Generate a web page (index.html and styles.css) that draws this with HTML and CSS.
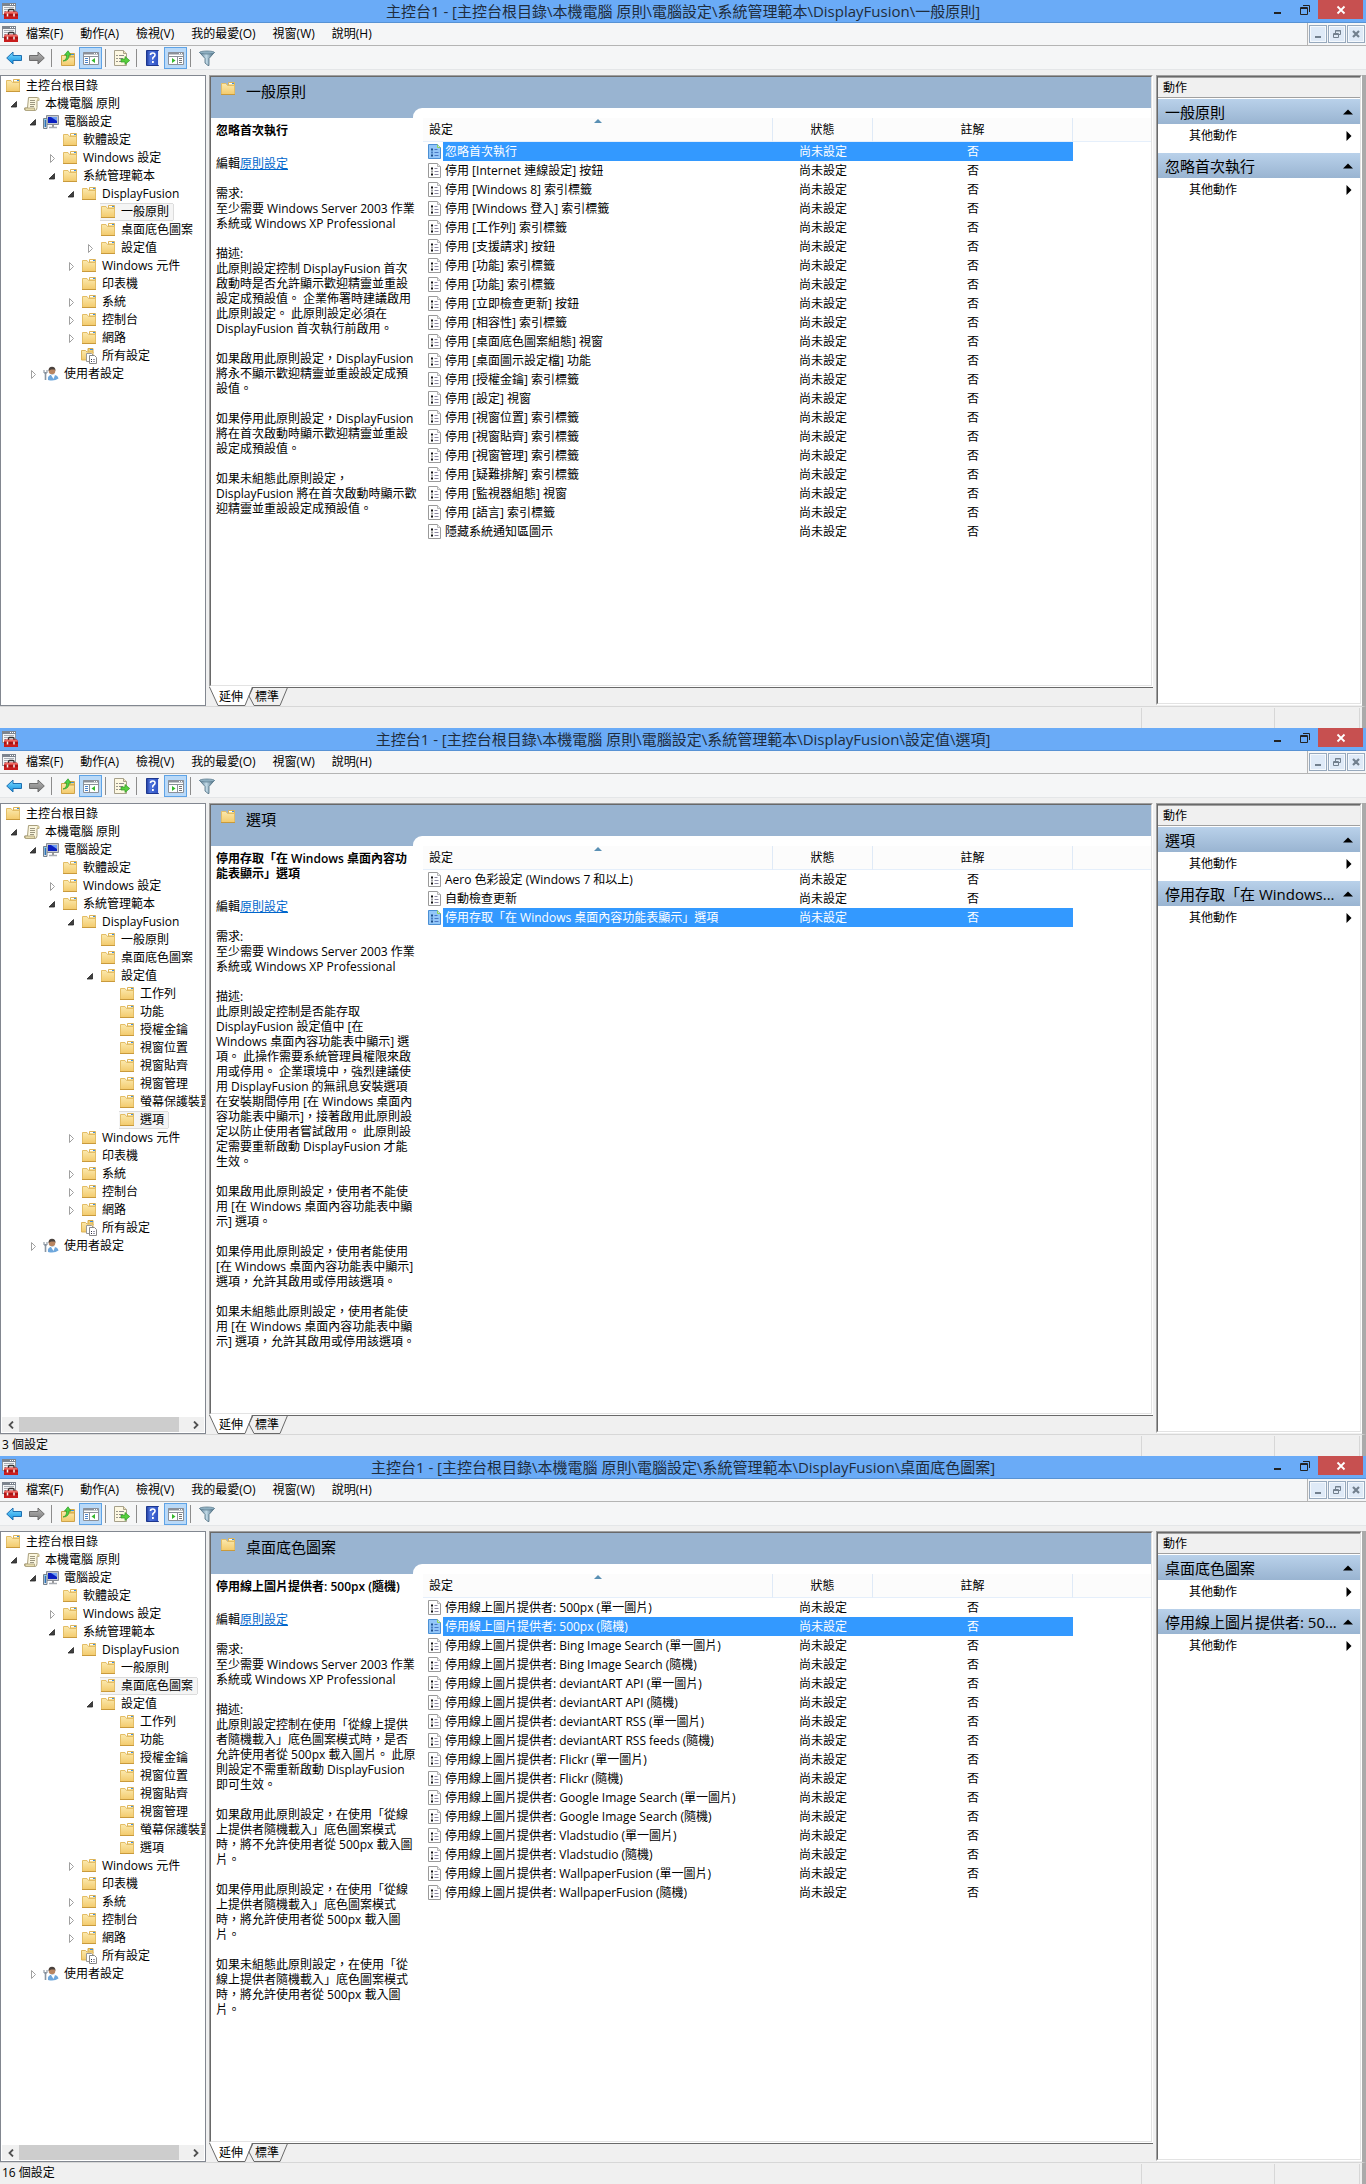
FILE: index.html
```html
<!DOCTYPE html>
<html lang="zh-Hant">
<head>
<meta charset="utf-8">
<title>主控台1</title>
<link rel="stylesheet" href="styles.css">
</head>
<body>
<svg class="sprite" aria-hidden="true">
  <defs>
    <linearGradient id="g-folder" x1="0" y1="0" x2="0" y2="1"><stop offset="0" stop-color="#fbe9ae"/><stop offset="1" stop-color="#f3ca6b"/></linearGradient>
    <linearGradient id="g-blue" x1="0" y1="0" x2="0" y2="1"><stop offset="0" stop-color="#7fdcff"/><stop offset="1" stop-color="#0f8fe0"/></linearGradient>
    <linearGradient id="g-gray" x1="0" y1="0" x2="0" y2="1"><stop offset="0" stop-color="#b5b5b5"/><stop offset="1" stop-color="#7a7a7a"/></linearGradient>
    <linearGradient id="g-help" x1="0" y1="0" x2="1" y2="0"><stop offset="0" stop-color="#1f3c9c"/><stop offset=".3" stop-color="#4f74de"/><stop offset="1" stop-color="#2c4fc0"/></linearGradient>
    <linearGradient id="g-funnel" x1="0" y1="0" x2="1" y2="0"><stop offset="0" stop-color="#55788f"/><stop offset=".45" stop-color="#c3dbe8"/><stop offset="1" stop-color="#3f6178"/></linearGradient>
  </defs>
  <symbol id="mmc" viewBox="0 0 16 16">
    <rect x=".5" y=".5" width="13" height="11" fill="#f4f6f8" stroke="#8d939b"/>
    <path d="M0 1.5h14" stroke="#7d848e" stroke-width="3"/>
    <path d="M8 1.5h1M10 1.5h1M12 1.5h1" stroke="#fff"/>
    <path d="M2 4.500h10M2 6.500h4M2 8.500h2" stroke="#a8adb4"/>
    <path d="M6.500 9V7.500q0-1 1-1h3.500q1 0 1 1V9" fill="none" stroke="#333" stroke-width="1.400"/>
    <path d="M3 8.500h12l1 2V16H2v-5.500z" fill="#c81d1d"/>
    <path d="M3 9h12l.7 1.500H2.400z" fill="#ee6a62"/>
    <path d="M2 12h14" stroke="#8e0d0d"/>
    <path d="M5.500 10.500v3M12 10.500v3" stroke="#f3f3f3" stroke-width="1.500"/>
  </symbol>
  <symbol id="folder" viewBox="0 0 16 16">
    <path d="M8.500 1.500h6V6h-6z" fill="#f6dc92" stroke="#dcb45a"/>
    <path d="M9 2.500h5" stroke="#fff"/><path d="M12 2.500h2" stroke="#3f8fe0"/>
    <path d="M1.500 2.500h4.500L7.500 4.500h7v9h-13z" fill="url(#g-folder)" stroke="#e3bd66"/>
    <path d="M1 13.500h14" stroke="#c99a3c"/>
  </symbol>
  <symbol id="scroll" viewBox="0 0 16 16">
    <path d="M4.500 1.500h9q2 0 1.500 3h-2v7q0 3-2 3h-9q-2 0-1.500-2.500h3z" fill="#fbf6df" stroke="#a99f7c"/>
    <path d="M3.500 12h7v2.500h-8q-1.500 0-1.500-2.500z" fill="#e6dcae" stroke="#a99f7c" stroke-width=".8"/>
    <path d="M6 4.500h5M6 6.500h5M6 8.500h5M6 10.500h4" stroke="#9b9680"/>
    <path d="M13 4.500V3q0-1 1-1t1 2.500z" fill="#d8cc98"/>
  </symbol>
  <symbol id="computer" viewBox="0 0 16 16">
    <path d="M3.500 1.500h12v9h-12z" fill="#c4c8ce" stroke="#888d95"/>
    <path d="M5 3h9v6H5z" fill="#0a1fc0"/><path d="M8 3h6v4z" fill="#6c9cf4"/>
    <path d="M9 11h2v2H9z" fill="#999"/><path d="M6 13.500h8" stroke="#a7abb2" stroke-width="1.500"/>
    <path d="M.5 4.500h3.500v10H.5z" fill="#dce3ea" stroke="#74808c"/>
    <path d="M2.300 6v7" stroke="#2b74b8" stroke-width="1.500"/><path d="M1 5.500h2.500" stroke="#8bd0ee"/>
  </symbol>
  <symbol id="user" viewBox="0 0 16 16">
    <path d="M5 14q-1-5 4.500-5.500Q15 9 15.500 12.500q-4 3-10.500 1.500z" fill="#6ea7dc"/>
    <path d="M8 9l2.500 4L12 9z" fill="#fff"/>
    <circle cx="9" cy="5" r="3.300" fill="#b98560"/><path d="M5.500 5Q5.500.8 9 .8T12.500 5L11.500 3.500H8z" fill="#4a423d"/>
    <path d="M2.500 6v8" stroke="#8995a1" stroke-width="1.600"/><path d="M1 4v3h3V4" fill="none" stroke="#7d8894"/>
  </symbol>
  <symbol id="allset" viewBox="0 0 16 16">
    <path d="M7 .5h5V5H7z" fill="#f2d27c" stroke="#d4a846"/><path d="M9 1.500h3" stroke="#3f8fe0"/>
    <path d="M.5 2.500h4L6 4h6v8H.5z" fill="url(#g-folder)" stroke="#dcb45a"/>
    <path d="M5.500 5.500h5l2 2v6h-7z" fill="#fff" stroke="#999"/>
    <path d="M8.500 7.500h5l2 2v6h-7z" fill="#fff" stroke="#888"/>
    <path d="M10 11.500h1M10 13.500h1" stroke="#334"/><path d="M12 11.500h2M12 13.500h2" stroke="#99a"/>
  </symbol>
  <symbol id="doc" viewBox="0 0 14 16">
    <path d="M.5.5h9l3 3v11H.5z" fill="#fff" stroke="#9a9a9a"/><path d="M9.500.5v3h3" fill="#eee" stroke="#b5b5b5"/>
    <path d="M3 5.500h2M3 11.500h2" stroke="#111" stroke-width="2"/><path d="M3 8.500h2" stroke="#999" stroke-width="2"/>
    <path d="M6.500 5.500h3M6.500 8.500h4M6.500 11.500h4" stroke="#8a86a0"/>
  </symbol>
  <symbol id="docsel" viewBox="0 0 14 16">
    <path d="M.5.5h9l3 3v11H.5z" fill="#93c6f8" stroke="#4a8fd4"/><path d="M9.500.5v3h3" fill="#cdeed0" stroke="#8dd35c"/>
    <path d="M3 5.500h2M3 11.500h2" stroke="#1c4e8a" stroke-width="2"/><path d="M3 8.500h2" stroke="#4a80c0" stroke-width="2"/>
    <path d="M6.500 5.500h3M6.500 8.500h4M6.500 11.500h4" stroke="#4978c4"/>
  </symbol>
  <symbol id="back" viewBox="0 0 16 16"><path d="M.7 8 7 2v3.500h8.500v5H7V14z" fill="url(#g-blue)" stroke="#1d6eb0" stroke-linejoin="round"/></symbol>
  <symbol id="forward" viewBox="0 0 16 16"><path d="M15.300 8 9 2v3.500H.5v5H9V14z" fill="url(#g-gray)" stroke="#6d6d6d" stroke-linejoin="round"/></symbol>
  <symbol id="up" viewBox="0 0 16 16">
    <path d="M9 3.500h5.500V7H9z" fill="#f2d27c" stroke="#d4a846"/><path d="M11 4.500h3" stroke="#3f8fe0"/>
    <path d="M1.500 5.500h5L8 7h6.500v8.500h-13z" fill="url(#g-folder)" stroke="#cfa349"/>
    <path d="M3 11q4-1 3.500-6H4.500L8 .8 11 5H9q0 6-6 6z" fill="#4fd044" stroke="#2d9a24" stroke-width=".7"/>
  </symbol>
  <symbol id="pane-left" viewBox="0 0 16 16">
    <path d="M.5 2.500h15v12H.5z" fill="#fff" stroke="#8b9099"/><path d="M0 3.500h16" stroke="#8b9099" stroke-width="2"/><path d="M11 3.500h1M13 3.500h1" stroke="#fff"/>
    <path d="M1 6.500h14M6.500 7v8" stroke="#8b9099"/><path d="M2 8.500h3M2 10.500h3M2 12.500h3" stroke="#4a82c8"/>
    <path d="M12 8v5l-3.500-2.500z" fill="#35b82c"/>
  </symbol>
  <symbol id="pane-right" viewBox="0 0 16 16">
    <path d="M.5 2.500h15v12H.5z" fill="#fff" stroke="#8b9099"/><path d="M0 3.500h16" stroke="#8b9099" stroke-width="2"/><path d="M11 3.500h1M13 3.500h1" stroke="#fff"/>
    <path d="M1 6.500h14M9.500 7v8" stroke="#8b9099"/><path d="M11 8.500h3M11 10.500h3M11 12.500h3" stroke="#777"/>
    <path d="M4 8v5l3.500-2.500z" fill="#35b82c"/>
  </symbol>
  <symbol id="export" viewBox="0 0 16 16">
    <path d="M.5.5h9l3 3v12H.5z" fill="#fdf8e2" stroke="#a6a08a"/><path d="M9.500.5v3h3" fill="#eee3b8" stroke="#a6a08a"/>
    <path d="M2.500 5.500h1M2.500 8.500h1M2.500 11.500h1" stroke="#333"/><path d="M5 5.500h5M5 8.500h4M5 11.500h4" stroke="#8a8a8a"/>
    <path d="M7 9h4V6.500l4.700 4L11 14.500V12H7z" fill="#57cf3e" stroke="#2f9a22" stroke-width=".7"/>
  </symbol>
  <symbol id="help" viewBox="0 0 14 16">
    <path d="M.5.5h12v15H.5z" fill="url(#g-help)" stroke="#1c368e"/><path d="M12.500 1v14" stroke="#e8ecf8"/>
    <path d="M4.500 5q0-2 2.300-2T9 5q0 1.300-1.300 2T6.800 9.500" fill="none" stroke="#fff" stroke-width="1.600"/><path d="M6 11h1.800v2H6z" fill="#fff"/>
  </symbol>
  <symbol id="filter" viewBox="0 0 16 16">
    <path d="M.7 2.500 6 8.500v4.500l3 2.500h1V8.500l5.300-6z" fill="url(#g-funnel)" stroke="#4d6d80" stroke-width=".8"/>
    <ellipse cx="8" cy="2.500" rx="7.500" ry="1.500" fill="#8fb0c2" stroke="#5c7c8f" stroke-width=".8"/>
  </symbol>
  <symbol id="open" viewBox="0 0 8 10"><path d="M6.500 2.500v5.500H1z" fill="#404040" stroke="#262626" stroke-width=".8"/></symbol>
  <symbol id="closed" viewBox="0 0 8 10"><path d="M2.500 1.500v8L6.500 5.500z" fill="#fff" stroke="#a0a0a0"/></symbol>
  <symbol id="win-min" viewBox="0 0 12 12"><path d="M2 9h7" stroke="#222" stroke-width="2"/></symbol>
  <symbol id="win-restore" viewBox="0 0 12 12"><path d="M1.500 3.500h7v7h-7zM1 4.500h8M4 1.500h6.500V8" fill="none" stroke="#222"/></symbol>
  <symbol id="win-close" viewBox="0 0 12 12"><path d="m2.500 2.500 7 7m0-7-7 7" stroke="#fff" stroke-width="1.800"/></symbol>
  <symbol id="mdi-min" viewBox="0 0 12 12"><path d="M3 9h6" stroke="#72808e" stroke-width="2"/></symbol>
  <symbol id="mdi-restore" viewBox="0 0 12 12"><path d="M2.500 5.500h5v4h-5zM2 6.500h6M4.500 5V2.500h5v4H8M4 3h6" fill="none" stroke="#72808e"/></symbol>
  <symbol id="mdi-close" viewBox="0 0 12 12"><path d="m3 3 6 6m0-6-6 6" stroke="#72808e" stroke-width="2.200"/></symbol>
  <symbol id="collapse" viewBox="0 0 10 6"><path d="M0 5.500 5 .5l5 5z" fill="#000"/></symbol>
  <symbol id="submenu" viewBox="0 0 6 10"><path d="M.5 0v10l5-5z" fill="#000"/></symbol>
  <symbol id="sort" viewBox="0 0 8 4"><path d="M0 4 4 0l4 4z" fill="#5a90b4"/></symbol>
  <symbol id="arrow-l" viewBox="0 0 8 8"><path d="M6 .5 2.500 4 6 7.500" fill="none" stroke="#505050" stroke-width="1.800"/></symbol>
  <symbol id="arrow-r" viewBox="0 0 8 8"><path d="M2 .5 5.500 4 2 7.500" fill="none" stroke="#505050" stroke-width="1.800"/></symbol>
  <symbol id="tabs" viewBox="0 0 84 19">
    <path d="M0 0h43l-7 18.500H9z" fill="#fff"/>
    <path d="M44 .5 40 9l5 9.500h26L78.500.5z" fill="#f0f0f0" stroke="#696969"/>
    <path d="M.5 0 9 18.500h27L43.500 0" fill="none" stroke="#696969"/>
    <path d="M43 .5h41" stroke="#696969"/>
  </symbol>
</svg>

<section class="window">
  <header class="titlebar">
    <svg class="i16"><use href="#mmc"/></svg>
    <h1>主控台1 - [主控台根目錄\本機電腦 原則\電腦設定\系統管理範本\DisplayFusion\一般原則]</h1>
    <div class="winbtns"><button aria-label="最小化"><svg><use href="#win-min"/></svg></button><button aria-label="還原"><svg><use href="#win-restore"/></svg></button><button class="close" aria-label="關閉"><svg><use href="#win-close"/></svg></button></div>
  </header>
  <nav class="menubar">
    <svg class="i16"><use href="#mmc"/></svg>
    <button>檔案(F)</button><button>動作(A)</button><button>檢視(V)</button><button>我的最愛(O)</button><button>視窗(W)</button><button>說明(H)</button>
    <div class="mdi"><button aria-label="最小化"><svg><use href="#mdi-min"/></svg></button><button aria-label="還原"><svg><use href="#mdi-restore"/></svg></button><button aria-label="關閉"><svg><use href="#mdi-close"/></svg></button></div>
  </nav>
  <div class="toolbar">
    <button aria-label="上一頁"><svg><use href="#back"/></svg></button><button aria-label="下一頁"><svg><use href="#forward"/></svg></button><i></i>
    <button aria-label="上移一層"><svg><use href="#up"/></svg></button><button class="on" aria-label="顯示樹狀目錄"><svg><use href="#pane-left"/></svg></button><i></i>
    <button aria-label="匯出清單"><svg><use href="#export"/></svg></button><i></i>
    <button aria-label="說明"><svg><use href="#help"/></svg></button><button class="on" aria-label="顯示動作窗格"><svg><use href="#pane-right"/></svg></button><i></i>
    <button aria-label="篩選器"><svg><use href="#filter"/></svg></button>
  </div>
  <div class="work">
    <aside class="treepane">
      <ul class="tree">
        <li><svg><use href="#folder"/></svg><span>主控台根目錄</span></li>
        <li class="l1"><b><svg><use href="#open"/></svg></b><svg><use href="#scroll"/></svg><span>本機電腦 原則</span></li>
        <li class="l2"><b><svg><use href="#open"/></svg></b><svg><use href="#computer"/></svg><span>電腦設定</span></li>
        <li class="l3"><b></b><svg><use href="#folder"/></svg><span>軟體設定</span></li>
        <li class="l3"><b><svg><use href="#closed"/></svg></b><svg><use href="#folder"/></svg><span>Windows 設定</span></li>
        <li class="l3"><b><svg><use href="#open"/></svg></b><svg><use href="#folder"/></svg><span>系統管理範本</span></li>
        <li class="l4"><b><svg><use href="#open"/></svg></b><svg><use href="#folder"/></svg><span>DisplayFusion</span></li>
        <li class="l5 sel"><b></b><svg><use href="#folder"/></svg><span>一般原則</span></li>
        <li class="l5"><b></b><svg><use href="#folder"/></svg><span>桌面底色圖案</span></li>
        <li class="l5"><b><svg><use href="#closed"/></svg></b><svg><use href="#folder"/></svg><span>設定值</span></li>
        <li class="l4"><b><svg><use href="#closed"/></svg></b><svg><use href="#folder"/></svg><span>Windows 元件</span></li>
        <li class="l4"><b></b><svg><use href="#folder"/></svg><span>印表機</span></li>
        <li class="l4"><b><svg><use href="#closed"/></svg></b><svg><use href="#folder"/></svg><span>系統</span></li>
        <li class="l4"><b><svg><use href="#closed"/></svg></b><svg><use href="#folder"/></svg><span>控制台</span></li>
        <li class="l4"><b><svg><use href="#closed"/></svg></b><svg><use href="#folder"/></svg><span>網路</span></li>
        <li class="l4"><b></b><svg><use href="#allset"/></svg><span>所有設定</span></li>
        <li class="l2"><b><svg><use href="#closed"/></svg></b><svg><use href="#user"/></svg><span>使用者設定</span></li>
      </ul>
    </aside>
    <main class="center">
      <div class="sunken"><div class="inner">
        <h2 class="band"><svg class="i16"><use href="#folder"/></svg>一般原則</h2>
        <div class="detail">
          <div class="desc">
            <h3>忽略首次執行</h3>
            <p>編輯<a href="#edit">原則設定</a></p>
            <p>需求:<br>至少需要 Windows Server 2003 作業<br>系統或 Windows XP Professional</p>
            <p>描述:<br>此原則設定控制 DisplayFusion 首次<br>啟動時是否允許顯示歡迎精靈並重設<br>設定成預設值。 企業佈署時建議啟用<br>此原則設定。 此原則設定必須在<br>DisplayFusion 首次執行前啟用。</p>
            <p>如果啟用此原則設定，DisplayFusion<br>將永不顯示歡迎精靈並重設設定成預<br>設值。</p>
            <p>如果停用此原則設定，DisplayFusion<br>將在首次啟動時顯示歡迎精靈並重設<br>設定成預設值。</p>
            <p>如果未組態此原則設定，<br>DisplayFusion 將在首次啟動時顯示歡<br>迎精靈並重設設定成預設值。</p>
          </div>
          <div class="listpane">
            <table>
              <colgroup><col class="c1"><col class="c2"><col class="c3"><col></colgroup>
              <thead><tr><th class="first">設定<svg><use href="#sort"/></svg></th><th>狀態</th><th>註解</th><th></th></tr></thead>
              <tbody>
                <tr class="sel"><td><div><svg><use href="#docsel"/></svg><span>忽略首次執行</span></div></td><td>尚未設定</td><td>否</td></tr>
                <tr><td><div><svg><use href="#doc"/></svg><span>停用 [Internet 連線設定] 按鈕</span></div></td><td>尚未設定</td><td>否</td></tr>
                <tr><td><div><svg><use href="#doc"/></svg><span>停用 [Windows 8] 索引標籤</span></div></td><td>尚未設定</td><td>否</td></tr>
                <tr><td><div><svg><use href="#doc"/></svg><span>停用 [Windows 登入] 索引標籤</span></div></td><td>尚未設定</td><td>否</td></tr>
                <tr><td><div><svg><use href="#doc"/></svg><span>停用 [工作列] 索引標籤</span></div></td><td>尚未設定</td><td>否</td></tr>
                <tr><td><div><svg><use href="#doc"/></svg><span>停用 [支援請求] 按鈕</span></div></td><td>尚未設定</td><td>否</td></tr>
                <tr><td><div><svg><use href="#doc"/></svg><span>停用 [功能] 索引標籤</span></div></td><td>尚未設定</td><td>否</td></tr>
                <tr><td><div><svg><use href="#doc"/></svg><span>停用 [功能] 索引標籤</span></div></td><td>尚未設定</td><td>否</td></tr>
                <tr><td><div><svg><use href="#doc"/></svg><span>停用 [立即檢查更新] 按鈕</span></div></td><td>尚未設定</td><td>否</td></tr>
                <tr><td><div><svg><use href="#doc"/></svg><span>停用 [相容性] 索引標籤</span></div></td><td>尚未設定</td><td>否</td></tr>
                <tr><td><div><svg><use href="#doc"/></svg><span>停用 [桌面底色圖案組態] 視窗</span></div></td><td>尚未設定</td><td>否</td></tr>
                <tr><td><div><svg><use href="#doc"/></svg><span>停用 [桌面圖示設定檔] 功能</span></div></td><td>尚未設定</td><td>否</td></tr>
                <tr><td><div><svg><use href="#doc"/></svg><span>停用 [授權金鑰] 索引標籤</span></div></td><td>尚未設定</td><td>否</td></tr>
                <tr><td><div><svg><use href="#doc"/></svg><span>停用 [設定] 視窗</span></div></td><td>尚未設定</td><td>否</td></tr>
                <tr><td><div><svg><use href="#doc"/></svg><span>停用 [視窗位置] 索引標籤</span></div></td><td>尚未設定</td><td>否</td></tr>
                <tr><td><div><svg><use href="#doc"/></svg><span>停用 [視窗貼齊] 索引標籤</span></div></td><td>尚未設定</td><td>否</td></tr>
                <tr><td><div><svg><use href="#doc"/></svg><span>停用 [視窗管理] 索引標籤</span></div></td><td>尚未設定</td><td>否</td></tr>
                <tr><td><div><svg><use href="#doc"/></svg><span>停用 [疑難排解] 索引標籤</span></div></td><td>尚未設定</td><td>否</td></tr>
                <tr><td><div><svg><use href="#doc"/></svg><span>停用 [監視器組態] 視窗</span></div></td><td>尚未設定</td><td>否</td></tr>
                <tr><td><div><svg><use href="#doc"/></svg><span>停用 [語言] 索引標籤</span></div></td><td>尚未設定</td><td>否</td></tr>
                <tr><td><div><svg><use href="#doc"/></svg><span>隱藏系統通知區圖示</span></div></td><td>尚未設定</td><td>否</td></tr>
              </tbody>
            </table>
          </div>
        </div>
      </div></div>
      <div class="tabs"><svg><use href="#tabs"/></svg><button>延伸</button><button>標準</button></div>
    </main>
    <aside class="actions sunken"><div class="inner">
      <h2>動作</h2>
      <h3><span>一般原則</span><svg><use href="#collapse"/></svg></h3>
      <button>其他動作<svg><use href="#submenu"/></svg></button>
      <h3><span>忽略首次執行</span><svg><use href="#collapse"/></svg></h3>
      <button>其他動作<svg><use href="#submenu"/></svg></button>
    </div></aside>
  </div>
  <footer class="status"><span></span><span></span><span></span></footer>
</section>

<section class="window">
  <header class="titlebar">
    <svg class="i16"><use href="#mmc"/></svg>
    <h1>主控台1 - [主控台根目錄\本機電腦 原則\電腦設定\系統管理範本\DisplayFusion\設定值\選項]</h1>
    <div class="winbtns"><button aria-label="最小化"><svg><use href="#win-min"/></svg></button><button aria-label="還原"><svg><use href="#win-restore"/></svg></button><button class="close" aria-label="關閉"><svg><use href="#win-close"/></svg></button></div>
  </header>
  <nav class="menubar">
    <svg class="i16"><use href="#mmc"/></svg>
    <button>檔案(F)</button><button>動作(A)</button><button>檢視(V)</button><button>我的最愛(O)</button><button>視窗(W)</button><button>說明(H)</button>
    <div class="mdi"><button aria-label="最小化"><svg><use href="#mdi-min"/></svg></button><button aria-label="還原"><svg><use href="#mdi-restore"/></svg></button><button aria-label="關閉"><svg><use href="#mdi-close"/></svg></button></div>
  </nav>
  <div class="toolbar">
    <button aria-label="上一頁"><svg><use href="#back"/></svg></button><button aria-label="下一頁"><svg><use href="#forward"/></svg></button><i></i>
    <button aria-label="上移一層"><svg><use href="#up"/></svg></button><button class="on" aria-label="顯示樹狀目錄"><svg><use href="#pane-left"/></svg></button><i></i>
    <button aria-label="匯出清單"><svg><use href="#export"/></svg></button><i></i>
    <button aria-label="說明"><svg><use href="#help"/></svg></button><button class="on" aria-label="顯示動作窗格"><svg><use href="#pane-right"/></svg></button><i></i>
    <button aria-label="篩選器"><svg><use href="#filter"/></svg></button>
  </div>
  <div class="work">
    <aside class="treepane">
      <ul class="tree">
        <li><svg><use href="#folder"/></svg><span>主控台根目錄</span></li>
        <li class="l1"><b><svg><use href="#open"/></svg></b><svg><use href="#scroll"/></svg><span>本機電腦 原則</span></li>
        <li class="l2"><b><svg><use href="#open"/></svg></b><svg><use href="#computer"/></svg><span>電腦設定</span></li>
        <li class="l3"><b></b><svg><use href="#folder"/></svg><span>軟體設定</span></li>
        <li class="l3"><b><svg><use href="#closed"/></svg></b><svg><use href="#folder"/></svg><span>Windows 設定</span></li>
        <li class="l3"><b><svg><use href="#open"/></svg></b><svg><use href="#folder"/></svg><span>系統管理範本</span></li>
        <li class="l4"><b><svg><use href="#open"/></svg></b><svg><use href="#folder"/></svg><span>DisplayFusion</span></li>
        <li class="l5"><b></b><svg><use href="#folder"/></svg><span>一般原則</span></li>
        <li class="l5"><b></b><svg><use href="#folder"/></svg><span>桌面底色圖案</span></li>
        <li class="l5"><b><svg><use href="#open"/></svg></b><svg><use href="#folder"/></svg><span>設定值</span></li>
        <li class="l6"><b></b><svg><use href="#folder"/></svg><span>工作列</span></li>
        <li class="l6"><b></b><svg><use href="#folder"/></svg><span>功能</span></li>
        <li class="l6"><b></b><svg><use href="#folder"/></svg><span>授權金鑰</span></li>
        <li class="l6"><b></b><svg><use href="#folder"/></svg><span>視窗位置</span></li>
        <li class="l6"><b></b><svg><use href="#folder"/></svg><span>視窗貼齊</span></li>
        <li class="l6"><b></b><svg><use href="#folder"/></svg><span>視窗管理</span></li>
        <li class="l6"><b></b><svg><use href="#folder"/></svg><span>螢幕保護裝置</span></li>
        <li class="l6 sel"><b></b><svg><use href="#folder"/></svg><span>選項</span></li>
        <li class="l4"><b><svg><use href="#closed"/></svg></b><svg><use href="#folder"/></svg><span>Windows 元件</span></li>
        <li class="l4"><b></b><svg><use href="#folder"/></svg><span>印表機</span></li>
        <li class="l4"><b><svg><use href="#closed"/></svg></b><svg><use href="#folder"/></svg><span>系統</span></li>
        <li class="l4"><b><svg><use href="#closed"/></svg></b><svg><use href="#folder"/></svg><span>控制台</span></li>
        <li class="l4"><b><svg><use href="#closed"/></svg></b><svg><use href="#folder"/></svg><span>網路</span></li>
        <li class="l4"><b></b><svg><use href="#allset"/></svg><span>所有設定</span></li>
        <li class="l2"><b><svg><use href="#closed"/></svg></b><svg><use href="#user"/></svg><span>使用者設定</span></li>
      </ul>
      <div class="hscroll"><button aria-label="向左捲動"><svg><use href="#arrow-l"/></svg></button><div class="track"><div class="thumb"></div></div><button aria-label="向右捲動"><svg><use href="#arrow-r"/></svg></button></div>
    </aside>
    <main class="center">
      <div class="sunken"><div class="inner">
        <h2 class="band"><svg class="i16"><use href="#folder"/></svg>選項</h2>
        <div class="detail">
          <div class="desc">
            <h3>停用存取「在 Windows 桌面內容功<br>能表顯示」選項</h3>
            <p>編輯<a href="#edit">原則設定</a></p>
            <p>需求:<br>至少需要 Windows Server 2003 作業<br>系統或 Windows XP Professional</p>
            <p>描述:<br>此原則設定控制是否能存取<br>DisplayFusion 設定值中 [在<br>Windows 桌面內容功能表中顯示] 選<br>項。 此操作需要系統管理員權限來啟<br>用或停用。 企業環境中，強烈建議使<br>用 DisplayFusion 的無訊息安裝選項<br>在安裝期間停用 [在 Windows 桌面內<br>容功能表中顯示]，接著啟用此原則設<br>定以防止使用者嘗試啟用。 此原則設<br>定需要重新啟動 DisplayFusion 才能<br>生效。</p>
            <p>如果啟用此原則設定，使用者不能使<br>用 [在 Windows 桌面內容功能表中顯<br>示] 選項。</p>
            <p>如果停用此原則設定，使用者能使用<br>[在 Windows 桌面內容功能表中顯示]<br>選項，允許其啟用或停用該選項。</p>
            <p>如果未組態此原則設定，使用者能使<br>用 [在 Windows 桌面內容功能表中顯<br>示] 選項，允許其啟用或停用該選項。</p>
          </div>
          <div class="listpane">
            <table>
              <colgroup><col class="c1"><col class="c2"><col class="c3"><col></colgroup>
              <thead><tr><th class="first">設定<svg><use href="#sort"/></svg></th><th>狀態</th><th>註解</th><th></th></tr></thead>
              <tbody>
                <tr><td><div><svg><use href="#doc"/></svg><span>Aero 色彩設定 (Windows 7 和以上)</span></div></td><td>尚未設定</td><td>否</td></tr>
                <tr><td><div><svg><use href="#doc"/></svg><span>自動檢查更新</span></div></td><td>尚未設定</td><td>否</td></tr>
                <tr class="sel"><td><div><svg><use href="#docsel"/></svg><span>停用存取「在 Windows 桌面內容功能表顯示」選項</span></div></td><td>尚未設定</td><td>否</td></tr>
              </tbody>
            </table>
          </div>
        </div>
      </div></div>
      <div class="tabs"><svg><use href="#tabs"/></svg><button>延伸</button><button>標準</button></div>
    </main>
    <aside class="actions sunken"><div class="inner">
      <h2>動作</h2>
      <h3><span>選項</span><svg><use href="#collapse"/></svg></h3>
      <button>其他動作<svg><use href="#submenu"/></svg></button>
      <h3><span>停用存取「在 Windows...</span><svg><use href="#collapse"/></svg></h3>
      <button>其他動作<svg><use href="#submenu"/></svg></button>
    </div></aside>
  </div>
  <footer class="status"><span>3 個設定</span><span></span><span></span></footer>
</section>

<section class="window">
  <header class="titlebar">
    <svg class="i16"><use href="#mmc"/></svg>
    <h1>主控台1 - [主控台根目錄\本機電腦 原則\電腦設定\系統管理範本\DisplayFusion\桌面底色圖案]</h1>
    <div class="winbtns"><button aria-label="最小化"><svg><use href="#win-min"/></svg></button><button aria-label="還原"><svg><use href="#win-restore"/></svg></button><button class="close" aria-label="關閉"><svg><use href="#win-close"/></svg></button></div>
  </header>
  <nav class="menubar">
    <svg class="i16"><use href="#mmc"/></svg>
    <button>檔案(F)</button><button>動作(A)</button><button>檢視(V)</button><button>我的最愛(O)</button><button>視窗(W)</button><button>說明(H)</button>
    <div class="mdi"><button aria-label="最小化"><svg><use href="#mdi-min"/></svg></button><button aria-label="還原"><svg><use href="#mdi-restore"/></svg></button><button aria-label="關閉"><svg><use href="#mdi-close"/></svg></button></div>
  </nav>
  <div class="toolbar">
    <button aria-label="上一頁"><svg><use href="#back"/></svg></button><button aria-label="下一頁"><svg><use href="#forward"/></svg></button><i></i>
    <button aria-label="上移一層"><svg><use href="#up"/></svg></button><button class="on" aria-label="顯示樹狀目錄"><svg><use href="#pane-left"/></svg></button><i></i>
    <button aria-label="匯出清單"><svg><use href="#export"/></svg></button><i></i>
    <button aria-label="說明"><svg><use href="#help"/></svg></button><button class="on" aria-label="顯示動作窗格"><svg><use href="#pane-right"/></svg></button><i></i>
    <button aria-label="篩選器"><svg><use href="#filter"/></svg></button>
  </div>
  <div class="work">
    <aside class="treepane">
      <ul class="tree">
        <li><svg><use href="#folder"/></svg><span>主控台根目錄</span></li>
        <li class="l1"><b><svg><use href="#open"/></svg></b><svg><use href="#scroll"/></svg><span>本機電腦 原則</span></li>
        <li class="l2"><b><svg><use href="#open"/></svg></b><svg><use href="#computer"/></svg><span>電腦設定</span></li>
        <li class="l3"><b></b><svg><use href="#folder"/></svg><span>軟體設定</span></li>
        <li class="l3"><b><svg><use href="#closed"/></svg></b><svg><use href="#folder"/></svg><span>Windows 設定</span></li>
        <li class="l3"><b><svg><use href="#open"/></svg></b><svg><use href="#folder"/></svg><span>系統管理範本</span></li>
        <li class="l4"><b><svg><use href="#open"/></svg></b><svg><use href="#folder"/></svg><span>DisplayFusion</span></li>
        <li class="l5"><b></b><svg><use href="#folder"/></svg><span>一般原則</span></li>
        <li class="l5 sel"><b></b><svg><use href="#folder"/></svg><span>桌面底色圖案</span></li>
        <li class="l5"><b><svg><use href="#open"/></svg></b><svg><use href="#folder"/></svg><span>設定值</span></li>
        <li class="l6"><b></b><svg><use href="#folder"/></svg><span>工作列</span></li>
        <li class="l6"><b></b><svg><use href="#folder"/></svg><span>功能</span></li>
        <li class="l6"><b></b><svg><use href="#folder"/></svg><span>授權金鑰</span></li>
        <li class="l6"><b></b><svg><use href="#folder"/></svg><span>視窗位置</span></li>
        <li class="l6"><b></b><svg><use href="#folder"/></svg><span>視窗貼齊</span></li>
        <li class="l6"><b></b><svg><use href="#folder"/></svg><span>視窗管理</span></li>
        <li class="l6"><b></b><svg><use href="#folder"/></svg><span>螢幕保護裝置</span></li>
        <li class="l6"><b></b><svg><use href="#folder"/></svg><span>選項</span></li>
        <li class="l4"><b><svg><use href="#closed"/></svg></b><svg><use href="#folder"/></svg><span>Windows 元件</span></li>
        <li class="l4"><b></b><svg><use href="#folder"/></svg><span>印表機</span></li>
        <li class="l4"><b><svg><use href="#closed"/></svg></b><svg><use href="#folder"/></svg><span>系統</span></li>
        <li class="l4"><b><svg><use href="#closed"/></svg></b><svg><use href="#folder"/></svg><span>控制台</span></li>
        <li class="l4"><b><svg><use href="#closed"/></svg></b><svg><use href="#folder"/></svg><span>網路</span></li>
        <li class="l4"><b></b><svg><use href="#allset"/></svg><span>所有設定</span></li>
        <li class="l2"><b><svg><use href="#closed"/></svg></b><svg><use href="#user"/></svg><span>使用者設定</span></li>
      </ul>
      <div class="hscroll"><button aria-label="向左捲動"><svg><use href="#arrow-l"/></svg></button><div class="track"><div class="thumb"></div></div><button aria-label="向右捲動"><svg><use href="#arrow-r"/></svg></button></div>
    </aside>
    <main class="center">
      <div class="sunken"><div class="inner">
        <h2 class="band"><svg class="i16"><use href="#folder"/></svg>桌面底色圖案</h2>
        <div class="detail">
          <div class="desc">
            <h3>停用線上圖片提供者: 500px (隨機)</h3>
            <p>編輯<a href="#edit">原則設定</a></p>
            <p>需求:<br>至少需要 Windows Server 2003 作業<br>系統或 Windows XP Professional</p>
            <p>描述:<br>此原則設定控制在使用「從線上提供<br>者隨機載入」底色圖案模式時，是否<br>允許使用者從 500px 載入圖片。 此原<br>則設定不需重新啟動 DisplayFusion<br>即可生效。</p>
            <p>如果啟用此原則設定，在使用「從線<br>上提供者隨機載入」底色圖案模式<br>時，將不允許使用者從 500px 載入圖<br>片。</p>
            <p>如果停用此原則設定，在使用「從線<br>上提供者隨機載入」底色圖案模式<br>時，將允許使用者從 500px 載入圖<br>片。</p>
            <p>如果未組態此原則設定，在使用「從<br>線上提供者隨機載入」底色圖案模式<br>時，將允許使用者從 500px 載入圖<br>片。</p>
          </div>
          <div class="listpane">
            <table>
              <colgroup><col class="c1"><col class="c2"><col class="c3"><col></colgroup>
              <thead><tr><th class="first">設定<svg><use href="#sort"/></svg></th><th>狀態</th><th>註解</th><th></th></tr></thead>
              <tbody>
                <tr><td><div><svg><use href="#doc"/></svg><span>停用線上圖片提供者: 500px (單一圖片)</span></div></td><td>尚未設定</td><td>否</td></tr>
                <tr class="sel"><td><div><svg><use href="#docsel"/></svg><span>停用線上圖片提供者: 500px (隨機)</span></div></td><td>尚未設定</td><td>否</td></tr>
                <tr><td><div><svg><use href="#doc"/></svg><span>停用線上圖片提供者: Bing Image Search (單一圖片)</span></div></td><td>尚未設定</td><td>否</td></tr>
                <tr><td><div><svg><use href="#doc"/></svg><span>停用線上圖片提供者: Bing Image Search (隨機)</span></div></td><td>尚未設定</td><td>否</td></tr>
                <tr><td><div><svg><use href="#doc"/></svg><span>停用線上圖片提供者: deviantART API (單一圖片)</span></div></td><td>尚未設定</td><td>否</td></tr>
                <tr><td><div><svg><use href="#doc"/></svg><span>停用線上圖片提供者: deviantART API (隨機)</span></div></td><td>尚未設定</td><td>否</td></tr>
                <tr><td><div><svg><use href="#doc"/></svg><span>停用線上圖片提供者: deviantART RSS (單一圖片)</span></div></td><td>尚未設定</td><td>否</td></tr>
                <tr><td><div><svg><use href="#doc"/></svg><span>停用線上圖片提供者: deviantART RSS feeds (隨機)</span></div></td><td>尚未設定</td><td>否</td></tr>
                <tr><td><div><svg><use href="#doc"/></svg><span>停用線上圖片提供者: Flickr (單一圖片)</span></div></td><td>尚未設定</td><td>否</td></tr>
                <tr><td><div><svg><use href="#doc"/></svg><span>停用線上圖片提供者: Flickr (隨機)</span></div></td><td>尚未設定</td><td>否</td></tr>
                <tr><td><div><svg><use href="#doc"/></svg><span>停用線上圖片提供者: Google Image Search (單一圖片)</span></div></td><td>尚未設定</td><td>否</td></tr>
                <tr><td><div><svg><use href="#doc"/></svg><span>停用線上圖片提供者: Google Image Search (隨機)</span></div></td><td>尚未設定</td><td>否</td></tr>
                <tr><td><div><svg><use href="#doc"/></svg><span>停用線上圖片提供者: Vladstudio (單一圖片)</span></div></td><td>尚未設定</td><td>否</td></tr>
                <tr><td><div><svg><use href="#doc"/></svg><span>停用線上圖片提供者: Vladstudio (隨機)</span></div></td><td>尚未設定</td><td>否</td></tr>
                <tr><td><div><svg><use href="#doc"/></svg><span>停用線上圖片提供者: WallpaperFusion (單一圖片)</span></div></td><td>尚未設定</td><td>否</td></tr>
                <tr><td><div><svg><use href="#doc"/></svg><span>停用線上圖片提供者: WallpaperFusion (隨機)</span></div></td><td>尚未設定</td><td>否</td></tr>
              </tbody>
            </table>
          </div>
        </div>
      </div></div>
      <div class="tabs"><svg><use href="#tabs"/></svg><button>延伸</button><button>標準</button></div>
    </main>
    <aside class="actions sunken"><div class="inner">
      <h2>動作</h2>
      <h3><span>桌面底色圖案</span><svg><use href="#collapse"/></svg></h3>
      <button>其他動作<svg><use href="#submenu"/></svg></button>
      <h3><span>停用線上圖片提供者: 50...</span><svg><use href="#collapse"/></svg></h3>
      <button>其他動作<svg><use href="#submenu"/></svg></button>
    </div></aside>
  </div>
  <footer class="status"><span>16 個設定</span><span></span><span></span></footer>
</section>
</body>
</html>
```

FILE: styles.css
```css
* { box-sizing: border-box; margin: 0; padding: 0; }
body {
  min-height: 100vh;
  display: grid;
  grid-auto-rows: 1fr;
  font: 12px/15px "Open Sans", "Noto Sans CJK TC", sans-serif;
  color: #000;
  background: #f0f0f0;
}
button { font: inherit; color: inherit; border: 0; background: none; }
svg { display: block; flex: none; }
h1, h2, h3 { font-weight: normal; }
.sprite { position: absolute; width: 0; height: 0; }
.i16 { width: 16px; height: 16px; }

.window { min-width: 0; display: flex; flex-direction: column; }

/* title bar */
.titlebar {
  display: flex;
  align-items: center;
  height: 23px;
  padding-left: 2px;
  background: #6aabf7;
  border-bottom: 1px solid #5792d4;
}
.titlebar h1 {
  flex: 1;
  padding-left: 84px;
  text-align: center;
  font-size: 15px;
  line-height: 20px;
  color: #1f2d3d;
  white-space: nowrap;
}
.winbtns { display: flex; align-self: flex-start; padding-right: 3px; }
.winbtns button { width: 27px; height: 19px; display: grid; place-items: center; }
.winbtns svg { width: 12px; height: 12px; }
.winbtns .close { width: 45px; background: #c75050; }

/* menu bar */
.menubar {
  display: flex;
  align-items: center;
  height: 23px;
  padding-left: 2px;
  background: #f5f6f7;
  border-bottom: 1px solid #b4b4b4;
}
.menubar > button { margin-left: 8px; margin-right: 9px; line-height: 18px; white-space: nowrap; }
.mdi {
  display: flex;
  gap: 1px;
  margin-left: auto;
  height: 22px;
  padding: 2px 1px 0;
  border-left: 1px solid #b4b4b4;
}
.mdi button {
  width: 18px;
  height: 18px;
  display: grid;
  place-items: center;
  border: 1px solid #97a9bd;
  background: #dfeaf7;
  box-shadow: inset 0 0 0 1px #f5f9fd;
}
.mdi svg { width: 12px; height: 12px; }

/* tool bar */
.toolbar {
  display: flex;
  align-items: flex-end;
  height: 24px;
  padding-left: 2px;
  background: #f5f6f7;
  border-bottom: 1px solid #e4e6e8;
}
.toolbar button { width: 23px; height: 22px; display: grid; place-items: center; }
.toolbar svg { width: 16px; height: 16px; }
.toolbar .on { background: #b9d9f8; border: 1px solid #5ea3e6; }
.toolbar i { width: 1px; height: 18px; margin: 0 4px 2px 3px; background: #8c8c8c; }

/* three-pane work area */
.work {
  flex: 1;
  display: grid;
  grid-template-columns: 206px minmax(0, 1fr) 206px;
  column-gap: 3px;
  margin-top: 5px;
  border-right: 4px solid #aaa;
}

.treepane { display: flex; flex-direction: column; border: 1px solid #828790; background: #fff; overflow: hidden; }
.tree { flex: 1; list-style: none; padding-top: 1px; }
.tree li { display: flex; align-items: center; height: 18px; padding-left: 4px; white-space: nowrap; }
.tree li > svg { width: 16px; height: 16px; }
.tree li > span { height: 18px; padding: 0 4px 0 5px; line-height: 18px; }
.tree b { flex: none; width: 19px; padding-left: 5px; }
.tree b svg { width: 8px; height: 10px; }
.tree .l2 { padding-left: 23px; }
.tree .l3 { padding-left: 42px; }
.tree .l4 { padding-left: 61px; }
.tree .l5 { padding-left: 80px; }
.tree .l6 { padding-left: 99px; }
.tree .sel > svg, .tree .sel > span { background: #f5f5f5; box-shadow: 0 -1px #dcdcdc, 0 1px #dcdcdc; height: 16px; line-height: 16px; }
.tree .sel > span { box-shadow: 0 -1px #dcdcdc, 0 1px #dcdcdc, 1px 0 #dcdcdc; }

.hscroll { display: flex; height: 15px; margin: 0 1px 1px; background: #f0f0f0; }
.hscroll button { width: 17px; display: grid; place-items: center; }
.hscroll svg { width: 8px; height: 8px; }
.track { flex: 1; }
.thumb { width: 95%; height: 100%; background: #cdcdcd; }

.sunken { display: flex; border: 1px solid; border-color: #a0a0a0 #fff #fff #a0a0a0; }
.inner { flex: 1; min-width: 0; display: flex; flex-direction: column; border: 1px solid; border-color: #696969 #e3e3e3 #e3e3e3 #696969; background: #fff; }

.center { display: flex; flex-direction: column; }
.center .sunken { flex: 1; }
.band {
  display: flex;
  gap: 10px;
  height: 31px;
  padding: 4px 9px 0;
  background: #99b4d1;
  font-size: 15px;
  line-height: 20px;
}
.detail { flex: 1; display: grid; grid-template-columns: 202px minmax(0, 1fr); background: linear-gradient(#99b4d1 10px, #fff 10px); }
.desc { position: relative; z-index: 1; padding: 15px 0 16px 5px; white-space: nowrap; }
.desc h3 { margin-bottom: 18px; font-size: 12px; font-weight: 600; }
.desc p + p { margin-top: 15px; }
.desc a { color: #0066cc; }
.listpane { padding: 10px 0 0 10px; background: #fff; border-top-left-radius: 9px; }
table { width: 100%; table-layout: fixed; border-collapse: separate; border-spacing: 0; }
.c1 { width: 350px; }
.c2 { width: 100px; }
.c3 { width: 200px; }
th {
  position: relative;
  height: 24px;
  font-weight: normal;
  background: #fcfcfc;
  border-bottom: 1px solid #e5effb;
  border-right: 1px solid #dfeaf7;
}
th:last-child { border-right: 0; }
th.first { padding-left: 6px; text-align: left; }
th svg { position: absolute; top: 1px; left: 171px; width: 8px; height: 4px; }
td { height: 19px; text-align: center; white-space: nowrap; line-height: 19px; }
td div { display: flex; align-items: center; padding-left: 5px; text-align: left; }
td svg { width: 14px; height: 16px; margin-right: 1px; }
td span { flex: 1; padding-left: 2px; }
.sel td { color: #fff; background: #3399ff; }
.sel td:first-child { background: none; }
.sel td span { background: #3399ff; }

.tabs { position: relative; display: flex; height: 19px; padding-left: 9px; gap: 10px; border-top: 1px solid #696969; }
.tabs svg { position: absolute; top: -1px; left: 0; width: 84px; height: 19px; }
.tabs button { position: relative; width: 26px; line-height: 18px; }

.actions { margin-bottom: 1px; }
.actions h2 { height: 21px; padding-left: 5px; line-height: 19px; font-size: 12px; background: #f0f0f0; border-top: 1px solid #a0a0a0; border-bottom: 1px solid #a0a0a0; margin-bottom: 1px; }
.actions h3 {
  display: flex;
  align-items: center;
  justify-content: space-between;
  height: 25px;
  padding: 0 7px;
  font-size: 15px;
  line-height: 20px;
  white-space: nowrap;
  background: linear-gradient(#b9d1ea, #99b4d1);
}
.actions h3 svg { width: 10px; height: 6px; }
.actions button { display: flex; align-items: center; justify-content: space-between; height: 23px; margin-bottom: 6px; padding: 0 8px 0 31px; }
.actions button svg { width: 6px; height: 10px; }

/* status bar */
.status {
  display: grid;
  grid-template-columns: minmax(0, 1fr) 133px 85px;
  height: 22px;
  padding-right: 2px;
  border-top: 1px solid #d7d7d7;
  border-right: 4px solid #aaa;
}
.status span { margin-top: 1px; padding-left: 2px; line-height: 18px; border-right: 1px solid #d7d7d7; }
```
